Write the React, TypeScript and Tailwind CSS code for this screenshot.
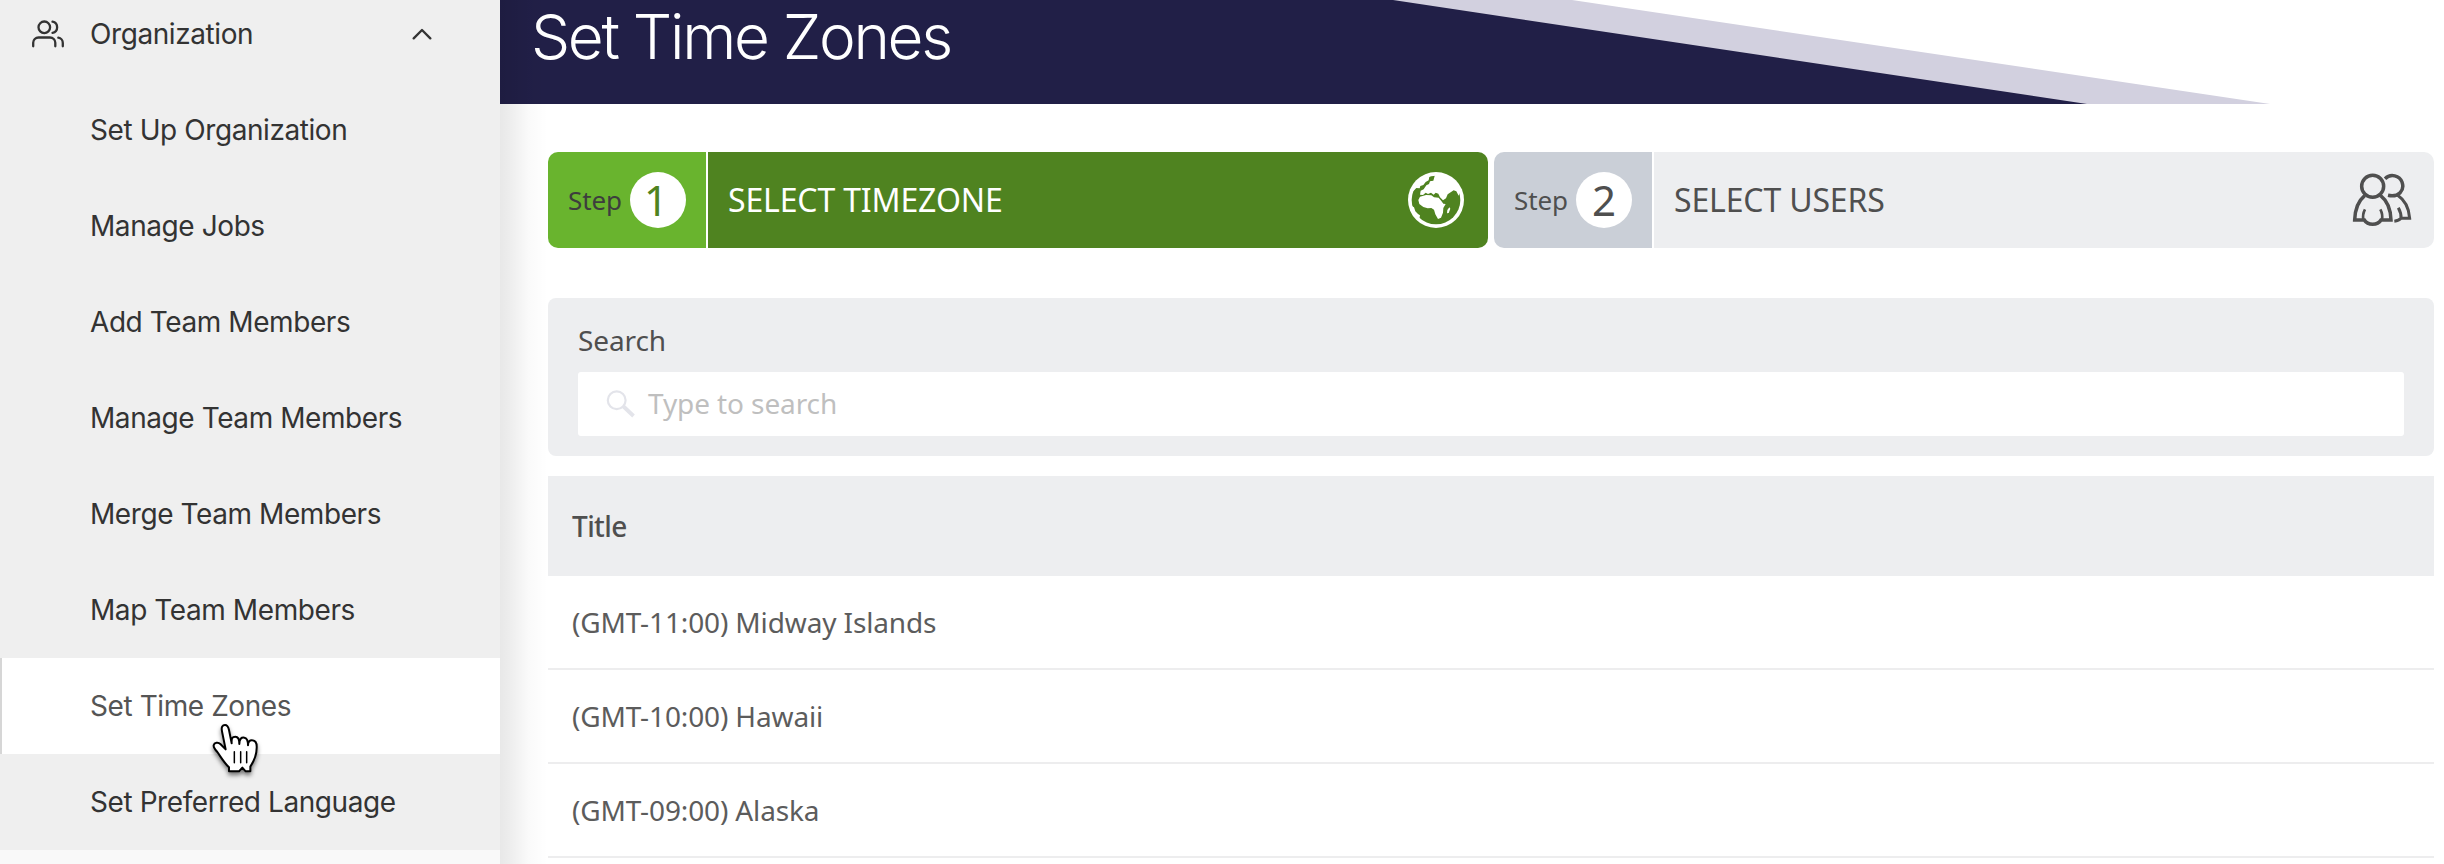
import type { ReactNode } from 'react'

const sidebarItems = [
  'Set Up Organization',
  'Manage Jobs',
  'Add Team Members',
  'Manage Team Members',
  'Merge Team Members',
  'Map Team Members',
  'Set Time Zones',
  'Set Preferred Language',
]

const activeItem = 'Set Time Zones'

const timeZones = ['(GMT-11:00) Midway Islands', '(GMT-10:00) Hawaii', '(GMT-09:00) Alaska']

export default function App() {
  return (
    <div className="flex h-[864px] w-[2444px] overflow-hidden bg-white font-['Noto_Sans',sans-serif] text-[#4f4f4f]">
      <Sidebar />
      <main className="relative flex min-w-0 flex-1 flex-col">
        <PageHeader title="Set Time Zones" />
        <div className="flex flex-col pt-12 pr-[10px] pl-12">
          <div className="flex gap-[6px]">
            <Step number={1} label="SELECT TIMEZONE" icon={<GlobeIcon />} active />
            <Step number={2} label="SELECT USERS" icon={<PeopleIcon />} />
          </div>
          <SearchPanel />
          <TimeZoneTable />
        </div>
        {/* shadow the sidebar casts on the page */}
        <div className="pointer-events-none absolute inset-y-0 left-0 w-12 bg-[linear-gradient(to_right,rgba(0,0,0,0.09),rgba(0,0,0,0.07)_20%,rgba(0,0,0,0.02)_60%,rgba(0,0,0,0))]" />
      </main>
    </div>
  )
}

function Sidebar() {
  return (
    <nav className="relative flex w-[500px] shrink-0 flex-col bg-[#f9f9f9] font-[Inter,sans-serif] text-[28px] tracking-[-0.42px] text-[#333]">
      <div className="-mt-[14px] flex h-24 shrink-0 items-center bg-[#efefef] pr-[68px] pl-8">
        <UsersIcon />
        <span className="ml-[26px] flex-1">Organization</span>
        <svg width="20" height="12" viewBox="0 0 20 12" fill="none" stroke="#333" strokeWidth="2.3" strokeLinecap="round" strokeLinejoin="round">
          <path d="M1.7 10.400 10 2l8.300 8.400" />
        </svg>
      </div>
      {sidebarItems.map((item) =>
        item === activeItem ? (
          <a key={item} className="flex h-24 shrink-0 items-center border-l-2 border-[#d6d6d6] bg-white pl-[88px] text-[#555]">
            {item}
          </a>
        ) : (
          <a key={item} className="flex h-24 shrink-0 items-center bg-[#efefef] pl-[90px]">
            {item}
          </a>
        ),
      )}
      <HandCursor />
    </nav>
  )
}

function PageHeader({ title }: { title: string }) {
  return (
    <header className="relative h-[104px] shrink-0 overflow-hidden">
      <svg className="absolute inset-0" width="1944" height="104" viewBox="0 0 1944 104">
        <path d="M0 0h1072l698 104H0z" fill="#d2d0df" />
        <path d="M0 0h893l694 104H0z" fill="#211f47" />
      </svg>
      <h1 className="relative pl-[31px] font-[Inter,sans-serif] text-[62px] leading-[74px] font-[350] tracking-[-2.3px] text-white">
        {title}
      </h1>
    </header>
  )
}

interface StepProps {
  number: number
  label: string
  icon: ReactNode
  active?: boolean
}

function Step({ number, label, icon, active = false }: StepProps) {
  return (
    <div className="flex h-24 flex-1 gap-[2px] overflow-hidden rounded-[10px]">
      <div className={`flex w-[158px] shrink-0 items-center pl-5 ${active ? 'bg-[#69b42e] text-[#3d3d3d]' : 'bg-[#cacfd7]'}`}>
        <span className="w-[62px] text-[26px] tracking-[-0.1px]">Step</span>
        <span
          className={`flex size-14 items-center justify-center rounded-full bg-white text-[42px] leading-none font-[450] ${active ? 'pr-1 text-[#4f8320]' : ''}`}
        >
          {number}
        </span>
      </div>
      <div
        className={`flex flex-1 items-center justify-between pl-5 text-[32px] tracking-[-0.15px] ${active ? 'bg-[#4f8320] pr-6 text-white' : 'bg-[#edeef0] pr-5'}`}
      >
        <span>{label}</span>
        {icon}
      </div>
    </div>
  )
}

function SearchPanel() {
  return (
    <section className="mt-[50px] flex h-[158px] flex-col rounded-lg bg-[#edeef0] px-[30px] pt-6 text-[28px] tracking-[-0.1px]">
      <label className="h-[50px] leading-[36px]">Search</label>
      <div className="flex h-16 items-center rounded-[3px] bg-white pl-[28px] text-[#bfbfbf]">
        <svg width="30" height="30" viewBox="0 0 30 30" fill="none" stroke="#e3e4ea">
          <circle cx="10.700" cy="11.200" r="8.900" strokeWidth="2.200" />
          <path d="m17 17 10.500 10" strokeWidth="3.800" />
        </svg>
        <span className="ml-[12px] pb-[2px]">Type to search</span>
      </div>
    </section>
  )
}

function TimeZoneTable() {
  return (
    <table className="mt-5 w-full border-separate border-spacing-0 text-left text-[28px] tracking-[-0.13px]">
      <thead>
        <tr className="h-[100px] bg-[#edeef0]">
          <th className="px-6 font-medium tracking-[-0.6px]">Title</th>
        </tr>
      </thead>
      <tbody>
        {timeZones.map((zone) => (
          <tr key={zone} className="h-[94px] text-[#5c5c5c]">
            <td className="border-b-2 border-[#ededee] px-6">{zone}</td>
          </tr>
        ))}
      </tbody>
    </table>
  )
}

function UsersIcon() {
  return (
    <svg width="32" height="28" viewBox="0 0 32 28" fill="none" stroke="#333" strokeWidth="2.300" strokeLinecap="round">
      <circle cx="12.300" cy="7.300" r="5.800" />
      <path d="M1.200 26.300v-3.500a5.300 5.300 0 0 1 5.300-5.300h11.500a5.300 5.300 0 0 1 5.300 5.300v3.500" />
      <path d="M20.500 1.700a5.700 5.700 0 0 1 0 11.200" />
      <path d="M26.300 17.700a5.300 5.300 0 0 1 4.500 5.300v3.300" />
    </svg>
  )
}

function GlobeIcon() {
  return (
    <svg width="56" height="56" viewBox="6 6 168 168">
      <circle cx="90" cy="90" r="84" fill="#fff" />
      {/* oceans */}
      <circle cx="90" cy="90" r="73" fill="#4f8320" />
      <g fill="#fff">
        {/* arctic coast */}
        <path d="M80 14 70 20 68 31 59 36 52 45 43 48 41 55 31 54 23 62 14 66C24 34 48 14 80 14z" />
        {/* europe and asia */}
        <path d="M87 14c40-2 70 24 82 62l-7-9-4 10-7-13-8-3-9 6-9 6-5 12-9 6-9-9-5-11-8-3-6 6-8-6-9 4-7-4-8 7-9-1 2-12 9-4 8-12 8-4 3-8 10-2z" />
        {/* africa */}
        <path d="M42 80l18-5 16 1 8 6 14 1 8 10 6 8 7 1-7 12-1 14-6 15-9 4-8-14-4-14-8-5-11 1-13-4-12-9-3-12z" />
        <path d="M130 112l3 4-5 13-5 1 1-10zM10 104l14 8 4 12 8 8 6 4-2 12-16-10z" />
      </g>
    </svg>
  )
}

function PeopleIcon() {
  return (
    <svg width="62" height="54" viewBox="156 100 186 162" fill="none" stroke="#4f4f4f" strokeWidth="10.500">
      <circle cx="218" cy="140" r="33" />
      <path d="M194 168c-18 15-29 42-30 73h29c10 17 40 17 50 0h30c-1-31-12-58-31-73" />
      <path d="M195 209c-6 11-7 22-5 33M241 209c6 11 7 22 5 33" strokeWidth="8" />
      <path d="M255 117c17-17 44-9 51 10 9 25-10 47-42 40" />
      <path d="M293 167c21 14 34 38 36 69h-26c-5 6-12 8-20 9M295 204c6 11 9 21 8 32" strokeWidth="9" />
    </svg>
  )
}

function HandCursor() {
  return (
    <svg
      className="absolute top-[722px] left-[210px] drop-shadow-[0_3px_2px_rgba(0,0,0,0.5)]"
      width="50"
      height="54"
      viewBox="30 36 150 162"
      strokeLinecap="round"
      strokeLinejoin="round"
    >
      <path
        d="M87 184V172C72 158 62 140 52 126 44 117 40 112 41 106 43 97 55 96 61 102L77 118 66 64C63 50 68 45 75 45 82 45 85 51 87 60L95 100C94 84 97 80 106 80 114 80 118 86 118 102 118 86 124 82 133 83 141 84 144 90 144 106 144 94 150 90 157 91 167 92 171 100 170 114 170 136 164 150 151 170V184H137L127 173 117 184z"
        fill="#fff"
        stroke="#000"
        strokeWidth="6"
      />
      <path d="M103 125v33M122 125v33M140 125v33" stroke="#000" strokeWidth="4.500" />
    </svg>
  )
}
